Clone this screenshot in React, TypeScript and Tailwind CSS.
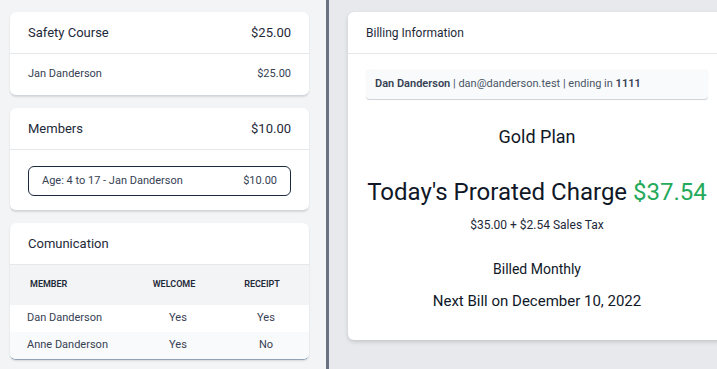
import React from 'react';

const rows = [
    { name: 'Dan Danderson', welcome: 'Yes', receipt: 'Yes' },
    { name: 'Anne Danderson', welcome: 'Yes', receipt: 'No' },
];

function Card({ children }: { children: React.ReactNode }) {
    return (
        <div className="bg-white rounded-md shadow-[0_1px_2px_rgba(0,0,0,0.12)] border-b border-gray-300 overflow-hidden">
            {children}
        </div>
    );
}

function CardHeader({ title, amount }: { title: string; amount?: string }) {
    return (
        <div className="h-[42px] px-[18px] flex items-center justify-between border-b border-gray-200 text-[13px] text-gray-800">
            <span>{title}</span>
            {amount && <span>{amount}</span>}
        </div>
    );
}

export default function App() {
    return (
        <div className="h-screen w-full flex overflow-hidden font-['Roboto',sans-serif] text-gray-800">
            <aside className="w-[326px] shrink-0 bg-[#f3f4f6] pt-3 pl-[10px] pr-[17px] flex flex-col gap-3">
                <Card>
                    <CardHeader title="Safety Course" amount="$25.00" />
                    <div className="h-[41px] px-[18px] flex items-center justify-between text-[11px] text-gray-700">
                        <span>Jan Danderson</span>
                        <span>$25.00</span>
                    </div>
                </Card>

                <Card>
                    <CardHeader title="Members" amount="$10.00" />
                    <div className="px-[18px] pt-4 pb-[14px]">
                        <div className="h-[30px] px-[13px] flex items-center justify-between border border-slate-800 rounded-md text-[11px] text-gray-700">
                            <span>Age: 4 to 17 - Jan Danderson</span>
                            <span>$10.00</span>
                        </div>
                    </div>
                </Card>

                <div className="bg-white rounded-md shadow-[0_1px_2px_rgba(0,0,0,0.12)] border-b border-slate-400 overflow-hidden">
                    <CardHeader title="Comunication" />
                    <div className="grid grid-cols-[120px_88px_1fr] h-[40px] items-center bg-[#f3f4f6] text-[9px] font-semibold uppercase text-gray-800">
                        <span className="pl-5">Member</span>
                        <span className="text-center">Welcome</span>
                        <span className="text-center pr-[3px]">Receipt</span>
                    </div>
                    {rows.map((r, i) => (
                        <div
                            key={r.name}
                            className={`grid grid-cols-[120px_88px_1fr] h-[27px] items-center text-[11px] text-gray-700 ${i % 2 ? 'bg-[#f9fafb]' : 'bg-white'}`}
                        >
                            <span className="pl-[17px] whitespace-nowrap">{r.name}</span>
                            <span className="text-center pl-2">{r.welcome}</span>
                            <span className="text-center pl-[5px]">{r.receipt}</span>
                        </div>
                    ))}
                </div>
            </aside>

            <div className="w-[3px] shrink-0 bg-gray-500" />

            <main className="flex-1 bg-[#e8e9ec] pt-3 pl-[19px] overflow-hidden">
                <div className="w-[378px] bg-white rounded-md shadow-[0_2px_4px_rgba(0,0,0,0.15)]">
                    <div className="h-[42px] px-[18px] flex items-center border-b border-gray-200 text-[12px] text-gray-800">
                        Billing Information
                    </div>
                    <div className="px-[18px] pt-4 pb-7 text-center">
                        <div className="h-[30px] px-[9px] flex items-center bg-[#f8fafc] rounded border-b border-gray-300 shadow-[0_0_1px_rgba(0,0,0,0.15)] text-[11px] text-gray-600 text-left">
                            <span className="font-semibold text-gray-700">Dan Danderson</span>
                            <span className="whitespace-pre"> | dan@danderson.test | ending in </span>
                            <span className="font-semibold text-gray-700">1111</span>
                        </div>
                        <div className="mt-[25px] text-[18px] leading-6 text-gray-900">Gold Plan</div>
                        <div className="mt-[27px] text-[24px] leading-8 text-gray-900 whitespace-nowrap">
                            Today's Prorated Charge <span className="text-[#25a95a]">$37.54</span>
                        </div>
                        <div className="mt-[9px] text-[12px] leading-4 text-gray-800">$35.00 + $2.54 Sales Tax</div>
                        <div className="mt-[26px] text-[14px] leading-5 text-gray-900">Billed Monthly</div>
                        <div className="mt-[11px] text-[15px] leading-[22px] text-gray-900">
                            Next Bill on December 10, 2022
                        </div>
                    </div>
                </div>
            </main>
        </div>
    );
}
